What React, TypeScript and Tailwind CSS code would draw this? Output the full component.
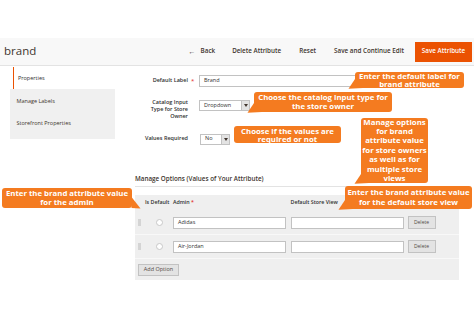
import React from "react";

const OR = "#f47b20";

function TailBL() {
  return (
    <svg className="absolute left-[-7px] bottom-[-1px]" width="16" height="11" viewBox="0 0 16 11">
      <polygon points="7,1 15,10 0.5,10.8" fill={OR} />
    </svg>
  );
}

function TailRight() {
  return (
    <svg className="absolute right-[-9px] bottom-[-1px]" width="10" height="14" viewBox="0 0 10 14">
      <polygon points="0.5,2 0.5,13 9.5,13.6" fill={OR} />
    </svg>
  );
}

function Tip({
  className,
  lines,
  children,
}: {
  className: string;
  lines: string[];
  children?: React.ReactNode;
}) {
  return (
    <div
      className={`absolute bg-[#f47b20] text-white font-bold text-[7.8px] rounded-[3px] flex flex-col items-center justify-center text-center ${className}`}
    >
      {lines.map((l) => (
        <span key={l} className="whitespace-nowrap">
          {l}
        </span>
      ))}
      {children}
    </div>
  );
}

function Input({ w, value }: { w: string; value?: string }) {
  return (
    <div className={`${w} h-[12px] bg-white border border-[#c2c2c2] flex items-center pl-[4px] text-[5.5px] text-[#303030]`}>
      {value}
    </div>
  );
}

function Select({ w, value }: { w: string; value: string }) {
  return (
    <div className={`${w} h-[11px] bg-white border border-[#c2c2c2] flex items-stretch text-[5.5px] text-[#303030]`}>
      <div className="flex-1 flex items-center pl-[4px]">{value}</div>
      <div className="w-[8px] bg-[#e3e3e3] border-l border-[#c2c2c2] flex items-center justify-center">
        <svg width="4" height="3" viewBox="0 0 4 3">
          <polygon points="0,0 4,0 2,3" fill="#41362f" />
        </svg>
      </div>
    </div>
  );
}

function OptionRow({ value }: { value: string }) {
  return (
    <div className="h-[24px] flex items-center border-b border-[#f8f8f8]">
      <div className="w-[38px] flex items-center">
        <div className="ml-[3px] w-[3px] h-[7px] bg-[#d4d4d4]" />
        <div className="ml-[15px] w-[7px] h-[7px] rounded-full bg-white border border-[#c8c8c8]" />
      </div>
      <div className="w-[117.5px]">
        <Input w="w-[113px]" value={value} />
      </div>
      <div className="w-[117px]">
        <Input w="w-[113px]" />
      </div>
      <div className="w-[28px] h-[13px] bg-[#e3e3e3] border border-[#c2c2c2] flex items-center justify-center text-[5px] text-[#514943]">
        Delete
      </div>
    </div>
  );
}

export default function App() {
  return (
    <div className="w-[474px] h-[316px] bg-white relative overflow-hidden font-['Open_Sans','Liberation_Sans',sans-serif] leading-none">
      <div className="h-[38px]" />
      <header className="h-[28px] bg-[#f8f8f8] border-b border-[#e3e3e3] flex items-center">
        <span className="ml-[4px] text-[11.5px] text-[#41362f] leading-none pb-[1px]">brand</span>
        <div className="ml-auto mr-[2px] flex items-center text-[6.3px] font-semibold text-[#41362f]">
          <span className="flex items-center gap-[5px]">
            <span className="text-[7px]">←</span>Back
          </span>
          <span className="ml-[17px]">Delete Attribute</span>
          <span className="ml-[18px]">Reset</span>
          <span className="ml-[18px]">Save and Continue Edit</span>
          <div className="ml-[11px] w-[57px] h-[20px] bg-[#eb5202] text-white flex items-center justify-center">
            Save Attribute
          </div>
        </div>
      </header>

      <div className="flex">
        <div className="pl-[10px] w-[115px] pt-[1px] shrink-0">
          <div className="h-[22px] flex items-center text-[5.5px] text-[#303030] bg-white">
            <div className="ml-[2.5px] w-[1.5px] h-full bg-[#eb5202]" />
            <span className="ml-[4px] mt-[2px]">Properties</span>
          </div>
          <div className="bg-[#f0f0f0] h-[50px] text-[5.5px] text-[#41362f]">
            <div className="h-[25px] flex items-center pl-[6.5px]">Manage Labels</div>
            <div className="h-[20px] flex items-center pl-[6.5px]">Storefront Properties</div>
          </div>
        </div>

        <div className="ml-[20px] w-[324px] shrink-0 text-[#303030]">
          <div className="mt-[9px] h-[11px] flex items-center">
            <div className="w-[53px] text-right text-[5.5px] font-semibold">Default Label</div>
            <div className="w-[11px] pl-[3px] text-[6px] text-[#e22626]">*</div>
            <Input w="w-[205px]" value="Brand" />
          </div>

          <div className="mt-[13px] flex items-start">
            <div className="w-[53px] text-right text-[5.5px] font-semibold leading-[7px]">
              <div>Catalog Input</div>
              <div>Type for Store</div>
              <div>Owner</div>
            </div>
            <div className="w-[11px]" />
            <div className="pt-[1px]">
              <Select w="w-[51px]" value="Dropdown" />
            </div>
          </div>

          <div className="mt-[14px] h-[10px] flex items-center">
            <div className="w-[53px] text-right text-[5.5px] font-semibold">Values Required</div>
            <div className="w-[12px]" />
            <Select w="w-[30px]" value="No" />
          </div>

          <div className="mt-[31px] pb-[3px] border-b border-[#e3e3e3] text-[6.3px] font-semibold text-[#41362f] leading-[8px]">
            Manage Options (Values of Your Attribute)
          </div>

          <div className="mt-[8px] bg-[#efefef]">
            <div className="h-[16px] flex items-center text-[5.3px] font-semibold text-[#303030]">
              <div className="w-[38px] pl-[10px]">Is Default</div>
              <div className="w-[117.5px]">
                Admin <span className="text-[#e22626]">*</span>
              </div>
              <div className="w-[117px]">Default Store View</div>
            </div>
            <OptionRow value="Adidas" />
            <OptionRow value="Air-Jordan" />
            <div className="h-[21px] flex items-center pl-[3px]">
              <div className="w-[41px] h-[12px] bg-[#e3e3e3] border border-[#c2c2c2] flex items-center justify-center text-[5.5px] text-[#514943]">
                Add Option
              </div>
            </div>
          </div>
        </div>
      </div>

      <Tip className="left-[355px] top-[72px] w-[109px] h-[16px] leading-[8px]" lines={["Enter the default label for", "brand attribute"]}>
        <TailBL />
      </Tip>
      <Tip className="left-[254px] top-[92px] w-[138px] h-[20px] leading-[9.5px]" lines={["Choose the catalog input type for", "the store owner"]}>
        <TailBL />
      </Tip>
      <Tip className="left-[234px] top-[126px] w-[107px] h-[17px] leading-[8px]" lines={["Choose if the values are", "required or not"]} />
      <Tip
        className="left-[361px] top-[118px] w-[67px] h-[65px] leading-[9.4px]"
        lines={["Manage options", "for brand", "attribute value", "for store owners", "as well as for", "multiple store", "views"]}
      >
        <TailBL />
      </Tip>
      <Tip className="left-[2px] top-[188px] w-[130px] h-[20px] leading-[9.3px]" lines={["Enter the brand attribute value", "for the admin"]}>
        <TailRight />
      </Tip>
      <Tip className="left-[345px] top-[186px] w-[127px] h-[23px] leading-[9.3px]" lines={["Enter the brand attribute value", "for the default store view"]}>
        <TailBL />
      </Tip>
    </div>
  );
}
